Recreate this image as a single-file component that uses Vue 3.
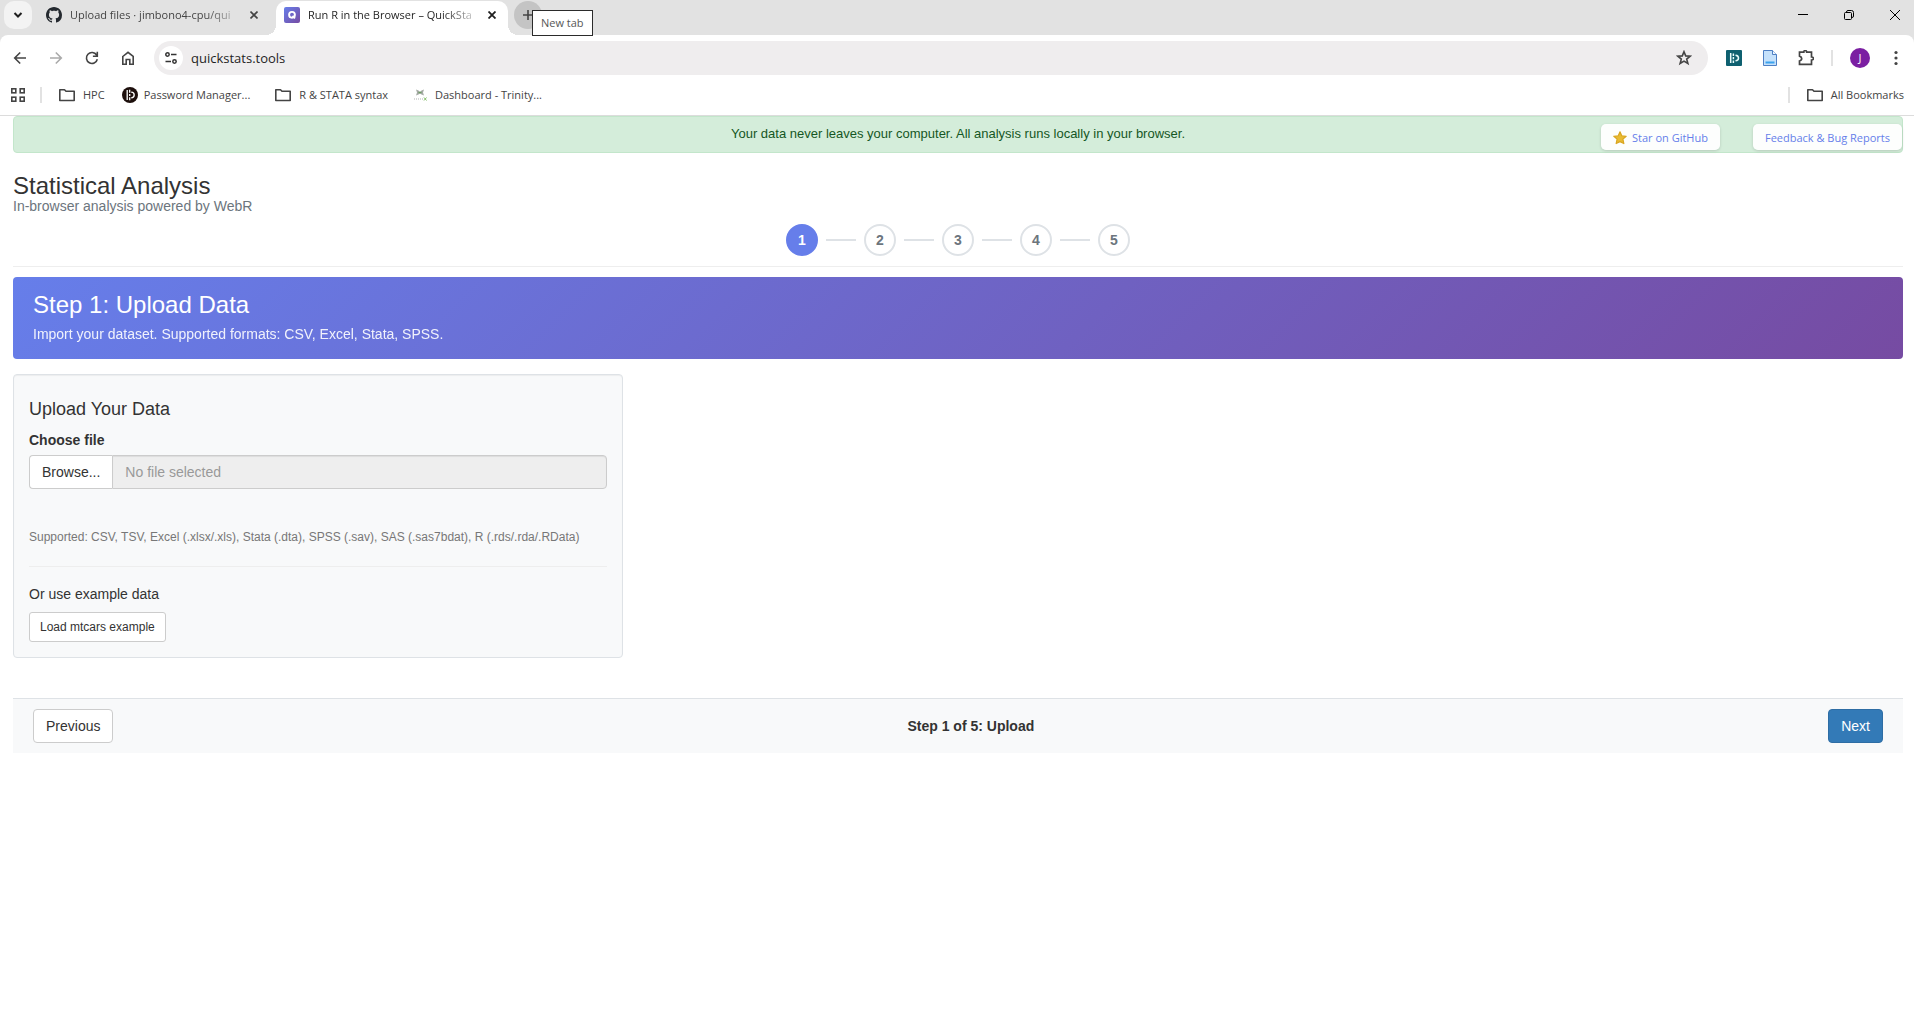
<script setup>
import { ref } from 'vue'

const address = ref('quickstats.tools')
const steps = [1, 2, 3, 4, 5]
const current = ref(1)
</script>

<template>
  <div class="window">
    <header class="browser">
      <div class="tabstrip">
        <button class="tab-search" aria-label="Search tabs">
          <svg width="10" height="10" viewBox="0 0 10 10"><path d="M1.5 3l3.5 3.5L8.500 3" fill="none" stroke="#1f1f1f" stroke-width="2" /></svg>
        </button>
        <div class="tab">
          <svg class="fav" width="16" height="16" viewBox="0 0 16 16"><path fill="#24292f" d="M8 0C3.580 0 0 3.580 0 8c0 3.540 2.290 6.530 5.470 7.590.4.070.55-.17.55-.38 0-.19-.01-.82-.01-1.490-2.010.37-2.530-.49-2.690-.94-.09-.23-.48-.94-.82-1.130-.28-.15-.68-.52-.01-.53.63-.01 1.080.58 1.230.82.720 1.210 1.870.87 2.330.66.070-.52.280-.87.510-1.070-1.780-.2-3.640-.89-3.640-3.950 0-.87.310-1.590.820-2.150-.08-.2-.36-1.020.08-2.120 0 0 .67-.21 2.200.82.640-.18 1.320-.27 2-.27s1.360.09 2 .27c1.530-1.040 2.200-.82 2.200-.82.440 1.100.160 1.920.080 2.120.510.560.820 1.270.820 2.150 0 3.070-1.870 3.750-3.650 3.950.290.250.540.730.540 1.480 0 1.070-.01 1.930-.01 2.200 0 .21.150.46.550.38A8.010 8.010 0 0 0 16 8c0-4.420-3.580-8-8-8z" /></svg>
          <span class="tab-title">Upload files · jimbono4-cpu/qui</span>
          <button class="close" aria-label="Close tab"><svg width="8" height="8" viewBox="0 0 8 8"><path d="M.5.5l7 7M7.500.5l-7 7" stroke="#444" stroke-width="1.600" /></svg></button>
        </div>
        <div class="tab active">
          <svg class="fav" width="16" height="16" viewBox="0 0 16 16">
            <defs><linearGradient id="fav" x1="0" y1="0" x2="1" y2="1"><stop offset="0" stop-color="#667eea" /><stop offset="1" stop-color="#764ba2" /></linearGradient></defs>
            <rect width="16" height="16" rx="2" fill="url(#fav)" />
            <circle cx="8" cy="7.800" r="2.900" fill="none" stroke="#fff" stroke-width="1.900" /><path d="M8.500 8.800l2.500 2.600" stroke="#fff" stroke-width="1.700" />
          </svg>
          <span class="tab-title">Run R in the Browser – QuickSta</span>
          <button class="close" aria-label="Close tab"><svg width="8" height="8" viewBox="0 0 8 8"><path d="M.5.5l7 7M7.500.5l-7 7" stroke="#1f1f1f" stroke-width="1.800" /></svg></button>
        </div>
        <div class="newtab-wrap">
          <button class="newtab" aria-label="New tab"><svg width="10" height="10" viewBox="0 0 10 10"><path d="M5 0v10M0 5h10" stroke="#444" stroke-width="1.600" /></svg></button>
          <span class="tooltip">New tab</span>
        </div>
        <div class="win-controls">
          <button aria-label="Minimize"><svg width="10" height="10" viewBox="0 0 10 10"><path d="M0 4.500h10" stroke="#000" /></svg></button>
          <button aria-label="Restore"><svg width="10" height="10" viewBox="0 0 10 10"><g fill="none" stroke="#000"><rect x=".5" y="2.500" width="7" height="7" rx="1" /><path d="M2.500 2.500v-.5Q2.500.5 4 .5h3.500q2 0 2 2V6q0 1.500-1.500 1.500h-.5" /></g></svg></button>
          <button aria-label="Close"><svg width="10" height="10" viewBox="0 0 10 10"><path d="M0 0l10 10M10 0L0 10" stroke="#000" /></svg></button>
        </div>
      </div>

      <div class="toolbar">
        <nav class="nav">
          <button aria-label="Back"><svg width="14" height="14" viewBox="0 0 14 14"><path d="M13 7H2M7.200 1.500L1.700 7l5.500 5.500" fill="none" stroke="#444" stroke-width="1.600" /></svg></button>
          <button aria-label="Forward"><svg width="14" height="14" viewBox="0 0 14 14"><path d="M1 7h11M6.800 1.500L12.300 7l-5.500 5.500" fill="none" stroke="#aaa" stroke-width="1.600" /></svg></button>
          <button aria-label="Reload"><svg width="14" height="14" viewBox="0 0 14 14"><path d="M12.300 8.200A5.500 5.500 0 1 1 11.600 4M12.300.8v4.400H7.900" fill="none" stroke="#444" stroke-width="1.600" /></svg></button>
          <button aria-label="Home"><svg width="14" height="14" viewBox="0 0 14 14"><path d="M1.800 5.500L7 1.300l5.200 4.200v7.700H8.800V8.500H5.200v4.700H1.800z" fill="none" stroke="#444" stroke-width="1.600" /></svg></button>
        </nav>
        <div class="omnibox">
          <button class="site-info" aria-label="View site information">
            <svg width="14" height="14" viewBox="0 0 14 14"><g fill="none" stroke="#333" stroke-width="1.500"><circle cx="3.500" cy="3.500" r="1.700" /><path d="M7 3.500h5.500M1.500 10.500H7" /><circle cx="10.500" cy="10.500" r="1.700" /></g></svg>
          </button>
          <input v-model="address" class="address" aria-label="Address" />
          <button class="plain" aria-label="Bookmark this tab"><svg width="16" height="16" viewBox="0 0 16 16"><path d="M8 1.700l1.700 4.200 4.500.3-3.500 2.900 1.200 4.400L8 11.100l-3.900 2.400 1.200-4.400L1.800 6.200l4.500-.3z" fill="none" stroke="#444" stroke-width="1.600" /></svg></button>
        </div>
        <div class="extensions">
          <svg width="16" height="16" viewBox="0 0 16 16"><rect width="16" height="16" rx="1" fill="#0e6070" /><path d="M4.700 3v10M7.400 3.500v2.500M7.400 7v2.200M7.400 10.500v2.500" stroke="#e9fbfb" stroke-width="1.500" /><path d="M9.500 5.200q3 .3 3 2.800t-3 2.800" fill="none" stroke="#e9fbfb" stroke-width="1.500" /></svg>
          <svg width="16" height="16" viewBox="0 0 16 16"><path d="M1.500.5h9l4 4v11h-13z" fill="#c5e1fb" stroke="#4d7fc4" /><path d="M10.500.5v4h4" fill="#eef7ff" stroke="#4d7fc4" /><path d="M3.500 11.500h9v2h-9z" fill="#3ba3ee" /></svg>
          <svg width="16" height="16" viewBox="0 0 16 16"><path d="M1.500 2.200h4.300q-.2-1.600 1.400-1.600t1.500 1.600h4.800V7q2 0 2 1.500t-2 1.500v4.300h-12V11q2.200-.5 2.200-2.400T1.500 6.100z" fill="none" stroke="#444" stroke-width="1.700" /></svg>
          <i class="divider"></i>
          <button class="avatar" aria-label="Profile">J</button>
          <svg width="16" height="16" viewBox="0 0 16 16" fill="#444"><circle cx="8" cy="2.500" r="1.600" /><circle cx="8" cy="8" r="1.600" /><circle cx="8" cy="13.500" r="1.600" /></svg>
        </div>
      </div>

      <div class="bookmarks">
        <svg class="apps" width="14" height="14" viewBox="0 0 14 14"><g fill="none" stroke="#444" stroke-width="1.600"><rect x=".8" y=".8" width="4" height="4" /><rect x="9.200" y=".8" width="4" height="4" /><rect x=".8" y="9.200" width="4" height="4" /><rect x="9.200" y="9.200" width="4" height="4" /></g></svg>
        <i class="divider"></i>
        <a href="#"><svg width="16" height="14" viewBox="0 0 16 14"><path d="M.8 1.800h4.700L7 3.300h8.200v9.200H.8z" fill="none" stroke="#444" stroke-width="1.600" stroke-linejoin="round" /></svg>HPC</a>
        <a href="#" class="tight"><svg width="16" height="16" viewBox="0 0 16 16"><circle cx="8" cy="8" r="8" fill="#1d0f0c" /><path d="M5.200 3v10M7.700 2.800v3M7.700 7v2M7.700 10.200v3" stroke="#fff" stroke-width="1.300" /><path d="M9.200 5.200q3 .2 3 2.800t-3 2.800" fill="none" stroke="#fff" stroke-width="1.300" /></svg>Password Manager...</a>
        <a href="#"><svg width="16" height="14" viewBox="0 0 16 14"><path d="M.8 1.800h4.700L7 3.300h8.200v9.200H.8z" fill="none" stroke="#444" stroke-width="1.600" stroke-linejoin="round" /></svg>R &amp; STATA syntax</a>
        <a href="#"><svg width="14" height="14" viewBox="0 0 14 14"><path d="M3 1.500l2.500 1L7 4l1.500-1.500 2.500-1-1 3 1 3-2.500-1L7 5.500 5.500 6.500 3 7.500l1-3z" fill="#a5aaa5" /><path d="M5.500 4.500h3" stroke="#6c9c62" stroke-width="1.500" /><path d="M1 11h9" stroke="#d8d8d8" stroke-width="2" stroke-dasharray="1 1" /><path d="M11 9.500l2.500 3M13.500 9.500l-2.500 3" stroke="#83bd68" /></svg>Dashboard - Trinity...</a>
        <span class="spacer"></span>
        <i class="divider"></i>
        <a href="#"><svg width="16" height="14" viewBox="0 0 16 14"><path d="M.8 1.800h4.700L7 3.300h8.200v9.200H.8z" fill="none" stroke="#444" stroke-width="1.600" stroke-linejoin="round" /></svg>All Bookmarks</a>
      </div>
    </header>

    <main class="page">
      <div class="notice">
        Your data never leaves your computer. All analysis runs locally in your browser.
        <div class="links">
          <a href="#"><svg width="14" height="14" viewBox="0 0 12 12"><path d="M6 .7l1.500 3.400 3.800.4-2.800 2.500.8 3.800L6 9.100l-3.300 1.700.8-3.800L.7 4.500l3.800-.4z" fill="#e8bb33" stroke="#d9a520" stroke-linejoin="round" /></svg>Star on GitHub</a>
          <a href="#">Feedback &amp; Bug Reports</a>
        </div>
      </div>

      <h1>Statistical Analysis</h1>
      <p class="lead">In-browser analysis powered by WebR</p>

      <ol class="steps">
        <li v-for="n in steps" :key="n" :class="{ on: n === current }"><span>{{ n }}</span></li>
      </ol>

      <section class="banner">
        <h2>Step 1: Upload Data</h2>
        <p>Import your dataset. Supported formats: CSV, Excel, Stata, SPSS.</p>
      </section>

      <section class="card">
        <h3>Upload Your Data</h3>
        <label for="file-name">Choose file</label>
        <div class="file">
          <button class="btn">Browse...</button>
          <input id="file-name" type="text" placeholder="No file selected" readonly />
        </div>
        <p class="help">Supported: CSV, TSV, Excel (.xlsx/.xls), Stata (.dta), SPSS (.sav), SAS (.sas7bdat), R (.rds/.rda/.RData)</p>
        <hr />
        <p class="example">Or use example data</p>
        <button class="btn small">Load mtcars example</button>
      </section>

      <footer class="pager">
        <button class="btn">Previous</button>
        <strong>Step 1 of 5: Upload</strong>
        <button class="btn primary">Next</button>
      </footer>
    </main>
  </div>
</template>

<style>
body {
  margin: 0;
  background: #fff;
}
</style>

<style scoped>
* {
  box-sizing: border-box;
}
button {
  font: inherit;
  color: inherit;
  border: 0;
  padding: 0;
  background: none;
}
svg {
  display: block;
  flex: none;
}
h1, h2, h3, p, ol {
  margin: 0;
  padding: 0;
  font-weight: 400;
}
a {
  text-decoration: none;
  color: inherit;
}

/* browser frame */
.browser {
  font: 11px/16px "Open Sans", "Noto Sans", sans-serif;
  color: #444;
  background: #e2e2e2;
  border-bottom: 1px solid #dcdcdc;
}
.tabstrip {
  display: flex;
  height: 35px;
  padding: 1px 0 0 4px;
}
.tab-search,
.newtab {
  width: 28px;
  height: 28px;
  border-radius: 10px;
  background: #f3f3f3;
  display: grid;
  place-items: center;
}
.tab {
  display: flex;
  align-items: center;
  width: 232px;
  height: 34px;
  padding: 0 12px 6px 8px;
  margin-left: 6px;
}
.tab-title {
  flex: 1;
  margin: 0 0 0 8px;
  white-space: nowrap;
  mask-image: linear-gradient(90deg, #000 75%, transparent 97%);
}
.tab.active {
  position: relative;
  background: #fff;
  border-radius: 10px 10px 0 0;
  color: #1f1f1f;
}
.tab.active::before,
.tab.active::after {
  content: "";
  position: absolute;
  bottom: 0;
  width: 10px;
  height: 10px;
}
.tab.active::before {
  right: 100%;
  background: radial-gradient(circle at 0 0, transparent 10px, #fff 10px);
}
.tab.active::after {
  left: 100%;
  background: radial-gradient(circle at 100% 0, transparent 10px, #fff 10px);
}
.newtab-wrap {
  position: relative;
  margin-left: 6px;
}
.newtab {
  background: #c4c4c4;
  border-radius: 50%;
}
.tooltip {
  position: absolute;
  left: 18px;
  top: 9px;
  padding: 4px 8px;
  white-space: nowrap;
  background: #fff;
  border: 1px solid #2b2b2b;
  color: #575757;
}
.win-controls {
  display: flex;
  margin-left: auto;
  margin-right: -4px;
}
.win-controls button {
  width: 46px;
  height: 28px;
  display: grid;
  place-items: center;
}
.toolbar {
  display: flex;
  align-items: center;
  height: 46px;
  padding: 0 10px 0 6px;
  background: #fff;
  border-radius: 8px 8px 0 0;
}
.nav {
  display: flex;
  gap: 8px;
}
.nav button {
  width: 28px;
  height: 28px;
  display: grid;
  place-items: center;
}
.omnibox {
  flex: 1;
  display: flex;
  align-items: center;
  height: 34px;
  margin: 0 18px 0 12px;
  padding: 0 16px 0 5px;
  border-radius: 17px;
  background: #efedee;
}
.site-info {
  width: 24px;
  height: 24px;
  border-radius: 50%;
  background: #fff;
  display: grid;
  place-items: center;
}
.address {
  flex: 1;
  min-width: 0;
  margin-left: 8px;
  padding: 0;
  border: 0;
  outline: 0;
  background: none;
  font: 13px/18px "Open Sans", "Noto Sans", sans-serif;
  color: #1f1f1f;
}
.extensions {
  display: flex;
  align-items: center;
  gap: 20px;
}
.divider {
  width: 2px;
  height: 16px;
  background: #e2e2e2;
}
.extensions .divider {
  margin: 0 -3px;
}
.avatar {
  width: 20px;
  height: 20px;
  border-radius: 50%;
  background: #7b1fa2;
  color: #fff;
  line-height: 20px;
}
.extensions .avatar {
  margin-right: -2px;
}
.bookmarks {
  display: flex;
  align-items: center;
  height: 34px;
  padding: 0 10px 6px 11px;
  background: #fff;
}
.bookmarks .divider {
  margin: 0 17px 0 15px;
}
.bookmarks a {
  display: flex;
  align-items: center;
  gap: 8px;
  margin-right: 25px;
  white-space: nowrap;
}
.bookmarks a:nth-of-type(1) {
  margin-right: 17px;
}
.bookmarks a.tight {
  gap: 6px;
}
.bookmarks a:last-child {
  margin-right: 0;
}
.spacer {
  flex: 1;
}

/* page */
.page {
  padding: 0 11px 0 13px;
  font: 14px/20px "Liberation Sans", Arial, sans-serif;
  color: #333;
}
.notice {
  position: relative;
  padding: 7px 15px 9px;
  border: 1px solid #c3e6cb;
  border-radius: 4px;
  background: #d4edda;
  color: #155724;
  font-size: 13px;
  line-height: 19px;
  text-align: center;
}
.links {
  position: absolute;
  top: 7px;
  right: 0;
  display: flex;
  gap: 33px;
}
.links a {
  display: flex;
  align-items: center;
  gap: 5px;
  height: 26px;
  padding: 1px 12px 0;
  border-radius: 5px;
  background: rgba(255, 255, 255, 0.95);
  box-shadow: 0 1px 3px rgba(0, 0, 0, 0.15);
  font: 11px/16px "Open Sans", "Noto Sans", sans-serif;
  color: #667eea;
}
h1 {
  margin-top: 22px;
  font-size: 24px;
  line-height: 22px;
}
.lead {
  line-height: 18px;
  color: #6c757d;
}
.steps {
  display: flex;
  justify-content: center;
  gap: 8px;
  padding: 9px 0 10px;
  border-bottom: 1px solid #eee;
  list-style: none;
}
.steps li {
  display: flex;
  align-items: center;
  gap: 8px;
}
.steps li + li::before {
  content: "";
  width: 30px;
  height: 2px;
  background: #dee2e6;
}
.steps span {
  width: 32px;
  height: 32px;
  border: 2px solid #dee2e6;
  border-radius: 50%;
  font-weight: 700;
  line-height: 28px;
  text-align: center;
  color: #6c757d;
}
.steps .on span {
  border-color: #667eea;
  background: #667eea;
  color: #fff;
}
.banner {
  margin-top: 10px;
  padding: 15px 20px;
  border-radius: 4px;
  background: linear-gradient(135deg, #667eea 0%, #764ba2 100%);
  color: #fff;
}
h2 {
  margin-bottom: 6px;
  font-size: 24px;
  line-height: 26px;
}
.banner p {
  opacity: 0.9;
}
.card {
  width: calc((100% + 30px) / 3 - 30px);
  margin-top: 15px;
  padding: 15px;
  border: 1px solid #dee2e6;
  border-radius: 4px;
  background: #f8f9fa;
  box-shadow: inset 0 1px 1px rgba(0, 0, 0, 0.05);
}
h3 {
  margin: 9px 0 11px;
  font-size: 18px;
  line-height: 20px;
}
label {
  display: block;
  margin-bottom: 5px;
  font-weight: 700;
}
.file {
  display: flex;
}
.btn {
  height: 34px;
  padding: 0 12px;
  border: 1px solid #ccc;
  border-radius: 4px;
  background: #fff;
  white-space: nowrap;
}
.file .btn {
  border-right: 0;
  border-radius: 4px 0 0 4px;
}
.file input {
  flex: 1;
  min-width: 0;
  height: 34px;
  padding: 0 12px;
  border: 1px solid #ccc;
  border-radius: 0 4px 4px 0;
  background: #eee;
  box-shadow: inset 0 1px 1px rgba(0, 0, 0, 0.075);
  font: inherit;
}
.file input::placeholder {
  color: #999;
}
.help {
  margin-top: 40px;
  font-size: 12px;
  line-height: 17px;
  color: #777;
}
hr {
  margin: 20px 0 17px;
  border: 0;
  border-top: 1px solid #eee;
}
.example {
  margin-bottom: 8px;
}
.btn.small {
  display: block;
  height: 30px;
  padding: 0 10px;
  border-radius: 3px;
  font-size: 12px;
}
.pager {
  display: flex;
  align-items: center;
  justify-content: space-between;
  margin-top: 40px;
  padding: 10px 20px;
  border-top: 1px solid #dee2e6;
  background: #f8f9fa;
}
.btn.primary {
  border-color: #2e6da4;
  background: #337ab7;
  color: #fff;
}
</style>
